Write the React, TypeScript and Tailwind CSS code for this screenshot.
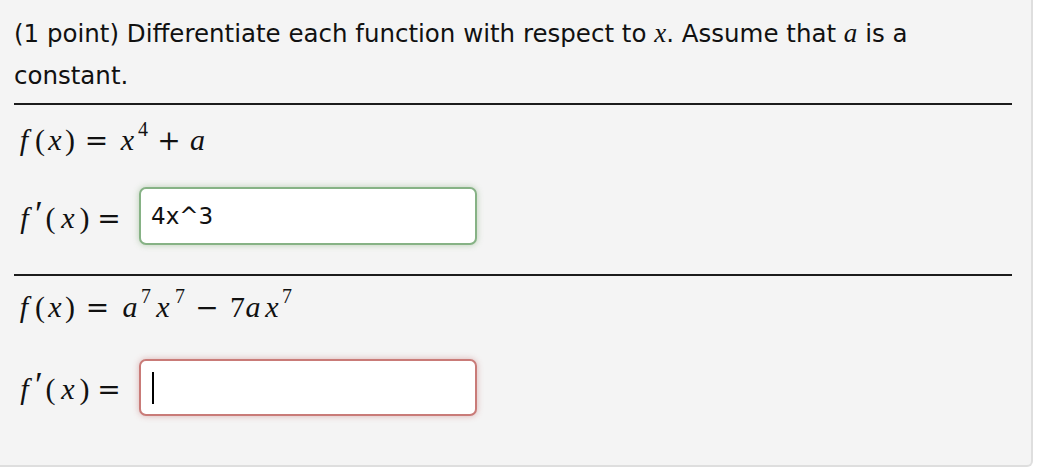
import React from "react";

function FPrime() {
  return (
    <div className="whitespace-nowrap font-['Liberation_Serif',serif] text-[30px] leading-[36px] text-[#111]">
      <span className="inline-block w-[21px] text-center italic">f</span>
      <span className="inline-block w-[9px] text-left text-[36px] leading-none align-[2px]">′</span>
      <span className="inline-block w-[13px] text-center">(</span>
      <span className="inline-block w-[22px] text-center italic">x</span>
      <span className="inline-block w-[11px] text-center">)</span>
      <span className="inline-block w-[38px] text-center font-['DejaVu_Serif',serif] text-[28px]">=</span>
    </div>
  );
}

export default function App() {
  return (
    <div className="w-[1042px] h-[476px] bg-white">
      <div className="w-[1033px] h-[467px] bg-[#f4f4f4] border-r-2 border-b-2 border-[#dedede] rounded-br-[6px] pl-[14px] pr-[19px] pt-[13px]">
        <p className="font-['DejaVu_Sans',sans-serif] text-[24.5px] leading-[42px] text-[#111]">
          (1 point) Differentiate each function with respect to{" "}
          <span className="font-['Liberation_Serif',serif] italic text-[27px] leading-none">x</span>. Assume that{" "}
          <span className="font-['Liberation_Serif',serif] italic text-[27px] leading-none">a</span> is a
          <br />
          constant.
        </p>
        <div className="mt-[6px] h-[2px] bg-[#1c1c1c]" />
        <div className="mt-[14px] h-[36px] leading-[36px] whitespace-nowrap font-['Liberation_Serif',serif] text-[30px] text-[#111]">
          <span className="inline-block w-[20px] text-center italic">f</span>
          <span className="inline-block w-[12px] text-center">(</span>
          <span className="inline-block w-[18px] text-center italic">x</span>
          <span className="inline-block w-[12px] text-center">)</span>
          <span className="inline-block w-[41px] text-center font-['DejaVu_Serif',serif] text-[28px]">=</span>
          <span className="inline-block w-[21px] text-center italic">x</span>
          <span className="inline-block w-[11px] text-left text-[20px] leading-none align-[14px]">4</span>
          <span className="inline-block w-[40px] text-center font-['DejaVu_Serif',serif] text-[28px]">+</span>
          <span className="inline-block w-[17px] text-center italic">a</span>
        </div>
        <div className="mt-[32px] flex items-center h-[58px]">
          <FPrime />
          <div className="ml-[11px] w-[338px] h-[58px] bg-white rounded-[7px] border-2 border-[#86b285] shadow-[0_0_6px_rgba(110,160,100,0.45)] flex items-center pl-[10px] font-['DejaVu_Sans',sans-serif] text-[23px] text-[#111]">
            4x^3
          </div>
        </div>
        <div className="mt-[29px] h-[2px] bg-[#1c1c1c]" />
        <div className="mt-[10px] h-[36px] leading-[36px] whitespace-nowrap font-['Liberation_Serif',serif] text-[30px] text-[#111]">
          <span className="inline-block w-[20px] text-center italic">f</span>
          <span className="inline-block w-[12px] text-center">(</span>
          <span className="inline-block w-[18px] text-center italic">x</span>
          <span className="inline-block w-[12px] text-center">)</span>
          <span className="inline-block w-[43px] text-center font-['DejaVu_Serif',serif] text-[28px]">=</span>
          <span className="inline-block w-[22px] text-center italic">a</span>
          <span className="inline-block w-[10px] text-left text-[20px] leading-none align-[14px]">7</span>
          <span className="inline-block w-[24px] text-center italic">x</span>
          <span className="inline-block w-[9px] text-left text-[20px] leading-none align-[14px]">7</span>
          <span className="inline-block w-[46px] text-center font-['DejaVu_Serif',serif] text-[28px]">−</span>
          <span className="inline-block w-[14px] text-center">7</span>
          <span className="inline-block w-[18px] text-center italic">a</span>
          <span className="inline-block w-[20px] text-center italic">x</span>
          <span className="inline-block w-[9px] text-left text-[20px] leading-none align-[14px]">7</span>
        </div>
        <div className="mt-[37px] flex items-center h-[57px]">
          <FPrime />
          <div className="ml-[11px] w-[338px] h-[57px] bg-white rounded-[7px] border-2 border-[#c97b78] shadow-[0_0_6px_rgba(190,100,100,0.45)] flex items-center pl-[11px]">
            <div className="w-[2px] h-[32px] bg-black" />
          </div>
        </div>
      </div>
    </div>
  );
}
